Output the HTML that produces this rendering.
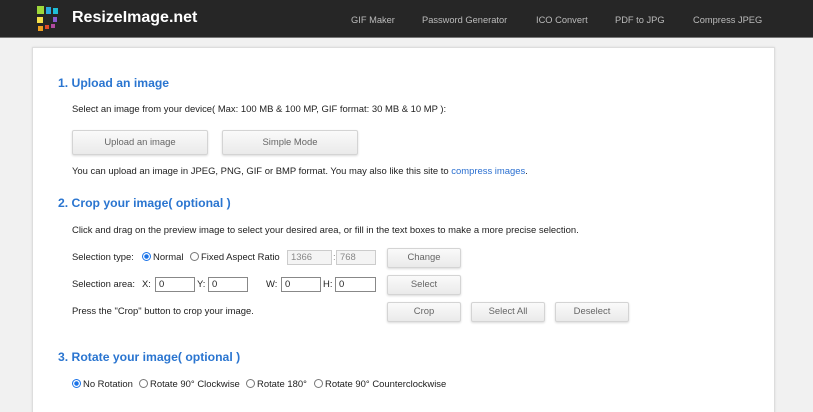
<!DOCTYPE html>
<html><head><meta charset="utf-8"><style>
*{box-sizing:border-box;margin:0;padding:0}
html,body{width:813px;height:412px;overflow:hidden}
body{background:#f1f1f1;font-family:"Liberation Sans",Arial,sans-serif;font-size:9.45px;color:#222;position:relative}
.hdr{position:absolute;left:0;top:0;width:813px;height:38px;background:#262626;border-bottom:1px solid #777}
.logo{position:absolute;left:72px;top:9px;color:#fff;font-size:16px;font-weight:bold}
.nav{position:absolute;top:15px;color:#bbb;font-size:9.3px}
.card{position:absolute;left:32px;top:47px;width:743px;height:380px;background:#fff;border:1px solid #ddd;box-shadow:0 0 2px rgba(0,0,0,.1)}
.a{position:absolute;white-space:nowrap}
h2{position:absolute;color:#2a75d0;font-size:12.2px;font-weight:bold;white-space:nowrap}
.btn{position:absolute;background:linear-gradient(#fafafa,#eaeaea);border:1px solid #d4d4d4;border-radius:2px;box-shadow:0 1px 2px rgba(0,0,0,.15);color:#666;font-size:9.45px;text-align:center}
.in{position:absolute;height:15px;border:1px solid #888;background:#fff;font-size:9.45px;padding-left:3px;line-height:13px}
.dis{border-color:#ccc;background:#f4f4f4;color:#888}
.r{display:inline-block;width:9px;height:9px;border:1px solid #777;border-radius:50%;vertical-align:-1px;margin-right:2px}
.rs{border-color:#1a73e8;background:radial-gradient(#1a73e8 40%,#fff 50%)}
</style></head><body>
<div class="hdr">
<svg style="position:absolute;left:36px;top:5px" width="28" height="28" viewBox="0 0 28 28">
<rect x="1" y="1" width="7" height="8" fill="#9ed83b"/><rect x="10" y="2" width="5" height="7" fill="#2aa9e0"/><rect x="17" y="3" width="5" height="6" fill="#1ebfd8"/>
<rect x="1" y="12" width="6" height="6" fill="#f4e04c"/><rect x="17" y="12" width="4" height="5" fill="#8a5bd0"/>
<rect x="2" y="21" width="5" height="5" fill="#f0a020"/><rect x="9" y="20" width="4" height="4" fill="#e24a2a"/><rect x="15" y="19" width="4" height="4" fill="#b04aa0"/>
</svg>
<div class="logo">ResizeImage.net</div>
<div class="nav" style="left:351px">GIF Maker</div>
<div class="nav" style="left:422px">Password Generator</div>
<div class="nav" style="left:536px">ICO Convert</div>
<div class="nav" style="left:615px">PDF to JPG</div>
<div class="nav" style="left:693px">Compress JPEG</div>
</div>
<div class="card"></div>
<h2 style="left:58px;top:76px">1. Upload an image</h2>
<div class="a" style="left:72px;top:104px">Select an image from your device( Max: 100 MB &amp; 100 MP, GIF format: 30 MB &amp; 10 MP ):</div>
<div class="btn" style="left:72px;top:130px;width:136px;height:25px;line-height:23px">Upload an image</div>
<div class="btn" style="left:222px;top:130px;width:136px;height:25px;line-height:23px">Simple Mode</div>
<div class="a" style="left:72px;top:166px">You can upload an image in JPEG, PNG, GIF or BMP format. You may also like this site to <span style="color:#2a6fd0">compress images</span>.</div>
<h2 style="left:58px;top:196px">2. Crop your image( optional )</h2>
<div class="a" style="left:72px;top:225px">Click and drag on the preview image to select your desired area, or fill in the text boxes to make a more precise selection.</div>
<div class="a" style="left:72px;top:252px">Selection type:</div>
<div class="a" style="left:142px;top:252px"><span class="r rs"></span>Normal</div>
<div class="a" style="left:190px;top:252px"><span class="r"></span>Fixed Aspect Ratio</div>
<div class="in dis" style="left:287px;top:250px;width:45px">1366</div>
<div class="a" style="left:333px;top:252px;color:#888">:</div>
<div class="in dis" style="left:336px;top:250px;width:40px">768</div>
<div class="btn" style="left:387px;top:248px;width:74px;height:20px;line-height:18px">Change</div>
<div class="a" style="left:72px;top:279px">Selection area:</div>
<div class="a" style="left:142px;top:279px">X:</div>
<div class="in" style="left:155px;top:277px;width:40px">0</div>
<div class="a" style="left:197px;top:279px">Y:</div>
<div class="in" style="left:208px;top:277px;width:40px">0</div>
<div class="a" style="left:266px;top:279px">W:</div>
<div class="in" style="left:281px;top:277px;width:40px">0</div>
<div class="a" style="left:323px;top:279px">H:</div>
<div class="in" style="left:335px;top:277px;width:41px">0</div>
<div class="btn" style="left:387px;top:275px;width:74px;height:20px;line-height:18px">Select</div>
<div class="a" style="left:72px;top:306px">Press the "Crop" button to crop your image.</div>
<div class="btn" style="left:387px;top:302px;width:74px;height:20px;line-height:18px">Crop</div>
<div class="btn" style="left:471px;top:302px;width:74px;height:20px;line-height:18px">Select All</div>
<div class="btn" style="left:555px;top:302px;width:74px;height:20px;line-height:18px">Deselect</div>
<h2 style="left:58px;top:350px">3. Rotate your image( optional )</h2>
<div class="a" style="left:72px;top:379px"><span class="r rs"></span>No Rotation</div>
<div class="a" style="left:139px;top:379px"><span class="r"></span>Rotate 90° Clockwise</div>
<div class="a" style="left:246px;top:379px"><span class="r"></span>Rotate 180°</div>
<div class="a" style="left:314px;top:379px"><span class="r"></span>Rotate 90° Counterclockwise</div>
</body></html>
